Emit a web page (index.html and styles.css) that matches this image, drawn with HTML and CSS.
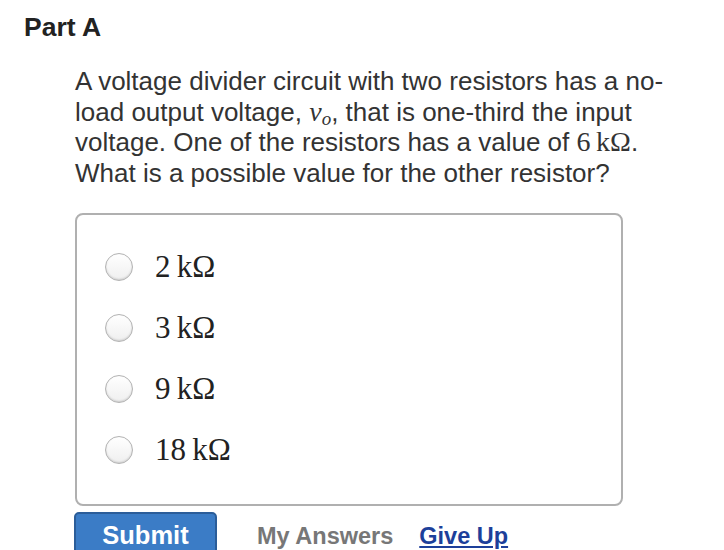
FILE: index.html
```html
<!DOCTYPE html>
<html lang="en">
<head>
  <meta charset="UTF-8">
  <meta name="viewport" content="width=device-width, initial-scale=1.0">
  <title>Part A</title>
  <link rel="stylesheet" href="styles.css">
</head>
<body>
  <h2 class="part-title">Part A</h2>

  <div class="question">
    <p class="prompt">
      A voltage divider circuit with two resistors has a no-load output voltage,
      <span class="math"><i>v</i><sub>o</sub></span>, that is one-third the input
      voltage. One of the resistors has a value of <span class="math">6&thinsp;kΩ</span>.
      What is a possible value for the other resistor?
    </p>

    <!-- Answer choices -->
    <div class="choices">
      <label class="choice">
        <span class="radio"></span>
        <span class="math-choice">2&thinsp;kΩ</span>
      </label>
      <label class="choice">
        <span class="radio"></span>
        <span class="math-choice">3&thinsp;kΩ</span>
      </label>
      <label class="choice">
        <span class="radio"></span>
        <span class="math-choice">9&thinsp;kΩ</span>
      </label>
      <label class="choice">
        <span class="radio"></span>
        <span class="math-choice">18&thinsp;kΩ</span>
      </label>
    </div>

    <!-- Actions -->
    <div class="actions">
      <button class="submit">Submit</button>
      <span class="my-answers">My Answers</span>
      <a href="#" class="give-up">Give Up</a>
    </div>
  </div>
</body>
</html>
```

FILE: styles.css
```css
* {
  box-sizing: border-box;
  margin: 0;
  padding: 0;
}

body {
  font-family: "Liberation Sans", Arial, sans-serif;
  color: #333;
  background-color: #fff;
}

.part-title {
  font-size: 26.5px;
  font-weight: bold;
  line-height: 30px;
  color: #222;
  margin: 12px 0 0 24px;
}

.question {
  padding-left: 75px;
}

.prompt {
  width: 600px;
  font-size: 26px;
  line-height: 30.5px;
  margin-top: 24px;
}

.math {
  font-family: "Liberation Serif", "Times New Roman", serif;
  font-size: 28px;
  line-height: 24px;
}

.math sub {
  font-style: italic;
  font-size: 19px;
  vertical-align: -4px;
  line-height: 0;
}

.choices {
  width: 548px;
  margin-top: 25px;
  border: 2px solid #b0b0b0;
  border-radius: 8px;
  padding: 21px 0 24px 28px;
}

.choice {
  display: flex;
  align-items: center;
  height: 61px;
}

.radio {
  width: 28px;
  height: 28px;
  border-radius: 50%;
  border: 1px solid #b3b3b3;
  background: linear-gradient(#ffffff, #efefef);
  box-shadow: inset 0 -1px 2px rgba(0, 0, 0, 0.15);
  margin-right: 22px;
}

.math-choice {
  font-family: "Liberation Serif", "Times New Roman", serif;
  font-size: 31px;
  color: #222;
}

.actions {
  display: flex;
  align-items: baseline;
  margin-top: 6px;
}

.submit {
  width: 143px;
  height: 46px;
  margin-left: -1px;
  background-color: #3b7cc6;
  border: 2px solid #2b5d99;
  border-radius: 5px;
  color: #fff;
  font-family: "Liberation Sans", Arial, sans-serif;
  font-size: 25.5px;
  font-weight: bold;
}

.my-answers {
  margin-left: 40px;
  font-size: 23.5px;
  font-weight: bold;
  color: #777;
}

.give-up {
  margin-left: 26px;
  font-size: 23.5px;
  font-weight: bold;
  color: #1d3f9a;
  text-decoration: underline;
}
```
